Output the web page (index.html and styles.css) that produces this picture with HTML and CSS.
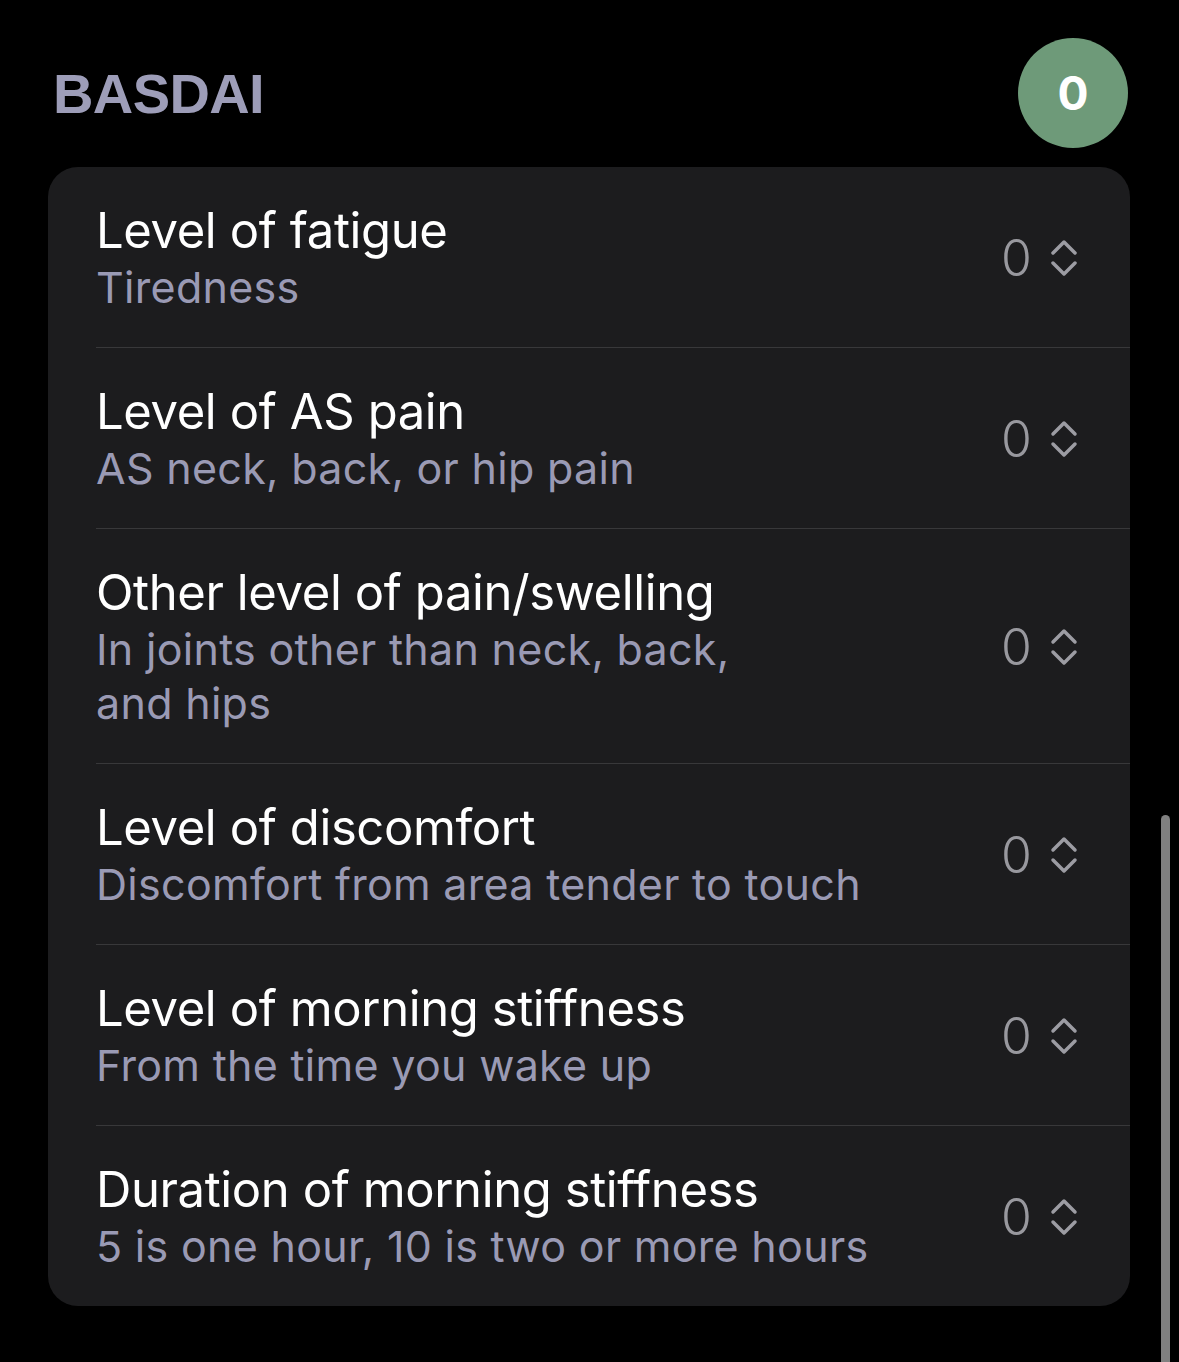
FILE: index.html
```html
<!DOCTYPE html>
<html lang="en">
<head>
  <meta charset="UTF-8">
  <meta name="viewport" content="width=device-width, initial-scale=1.0">
  <title>BASDAI</title>
  <link rel="stylesheet" href="styles.css">
</head>
<body>
  <div class="screen">
    <header class="section-head">
      <h1>BASDAI</h1>
      <div class="score">0</div>
    </header>

    <div class="card">
      <div class="row">
        <div class="text">
          <div class="title">Level of fatigue</div>
          <div class="sub">Tiredness</div>
        </div>
        <div class="stepper">
          <span class="value">0</span>
          <svg class="updown" viewBox="0 0 28 40"><path d="M3 15 L14 4 L25 15 M3 25 L14 36 L25 25"/></svg>
        </div>
      </div>
      <div class="row">
        <div class="text">
          <div class="title">Level of AS pain</div>
          <div class="sub">AS neck, back, or hip pain</div>
        </div>
        <div class="stepper">
          <span class="value">0</span>
          <svg class="updown" viewBox="0 0 28 40"><path d="M3 15 L14 4 L25 15 M3 25 L14 36 L25 25"/></svg>
        </div>
      </div>
      <div class="row">
        <div class="text">
          <div class="title">Other level of pain/swelling</div>
          <div class="sub narrow">In joints other than neck, back, and hips</div>
        </div>
        <div class="stepper">
          <span class="value">0</span>
          <svg class="updown" viewBox="0 0 28 40"><path d="M3 15 L14 4 L25 15 M3 25 L14 36 L25 25"/></svg>
        </div>
      </div>
      <div class="row">
        <div class="text">
          <div class="title">Level of discomfort</div>
          <div class="sub">Discomfort from area tender to touch</div>
        </div>
        <div class="stepper">
          <span class="value">0</span>
          <svg class="updown" viewBox="0 0 28 40"><path d="M3 15 L14 4 L25 15 M3 25 L14 36 L25 25"/></svg>
        </div>
      </div>
      <div class="row">
        <div class="text">
          <div class="title">Level of morning stiffness</div>
          <div class="sub">From the time you wake up</div>
        </div>
        <div class="stepper">
          <span class="value">0</span>
          <svg class="updown" viewBox="0 0 28 40"><path d="M3 15 L14 4 L25 15 M3 25 L14 36 L25 25"/></svg>
        </div>
      </div>
      <div class="row">
        <div class="text">
          <div class="title">Duration of morning stiffness</div>
          <div class="sub">5 is one hour, 10 is two or more hours</div>
        </div>
        <div class="stepper">
          <span class="value">0</span>
          <svg class="updown" viewBox="0 0 28 40"><path d="M3 15 L14 4 L25 15 M3 25 L14 36 L25 25"/></svg>
        </div>
      </div>
    </div>
  </div>
  <div class="scrollbar"></div>
</body>
</html>
```

FILE: styles.css
```css
body { margin: 0; background: #000; font-family: Inter, "Noto Sans", sans-serif; color: #fff; height: 1362px; overflow: hidden; }
.screen { padding: 38px 49px 0 48px; }

.section-head { display: flex; justify-content: space-between; align-items: center; padding: 0 2px 0 5px; margin-bottom: 19px; }
.section-head h1 { margin: 0; font-family: "Liberation Sans", Arial, sans-serif; font-size: 56px; font-weight: bold; color: #9d9db8; letter-spacing: -0.6px; }
.score { width: 110px; height: 110px; border-radius: 50%; background: #6e9a79; color: #fff; display: flex; align-items: center; justify-content: center; font-size: 46px; font-weight: 700; }

.card { background: #1c1c1e; border-radius: 30px; padding-left: 48px; }
.row { display: flex; align-items: center; justify-content: space-between; padding: 35px 52px 33px 0; border-bottom: 1px solid #38383a; }
.row:last-child { border-bottom: none; }
.title { font-size: 49px; line-height: 58px; letter-spacing: -0.4px; }
.sub { font-size: 43px; line-height: 54px; color: #9a9ab4; letter-spacing: 0.3px; }
.sub.narrow { max-width: 640px; }

.stepper { display: flex; align-items: center; gap: 18px; }
.value { font-size: 50px; color: #98989e; font-weight: 300; }
.updown { width: 28px; height: 40px; fill: none; stroke: #9c9ca3; stroke-width: 3.5; stroke-linecap: round; stroke-linejoin: round; }

.scrollbar { position: fixed; left: 1161px; top: 815px; width: 9px; height: 560px; background: #808080; border-radius: 5px; }
```
